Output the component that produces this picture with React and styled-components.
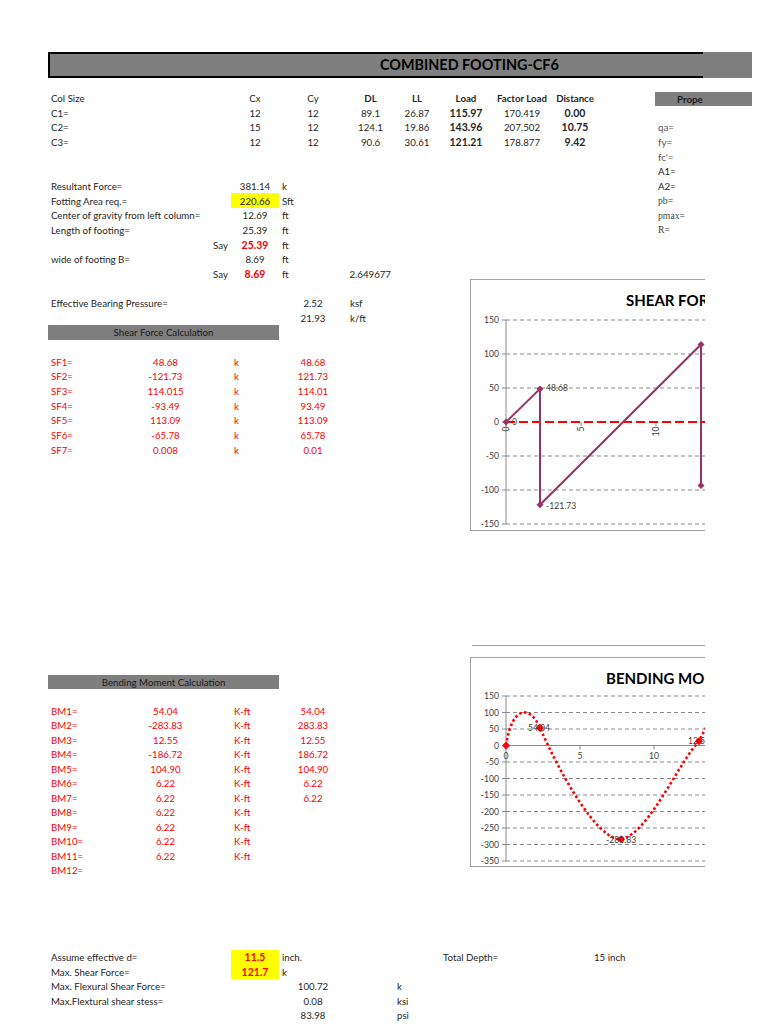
import React from "react";
import styled, { createGlobalStyle } from "styled-components";

const GlobalStyle = createGlobalStyle`
  html, body { margin: 0; padding: 0; background: #fff; }
  body {
    font-family: Lato, "Liberation Sans", sans-serif;
    color: #262626;
    overflow: hidden;
  }
`;

// spreadsheet columns A..L
const COLS = "52px 131px 48px 68px 47px 46px 52px 60px 46px 57px 48px 49px";
const GREY = "#7f7f7f";
const RED = "#ff0000";
const PLUM = "#993366";

const Page = styled.div`
  position: relative;
  width: 768px;
  height: 1024px;
  padding: 52px 0 0 48px;
  box-sizing: border-box;
  overflow: hidden;
`;

const TitleBar = styled.div`
  width: 704px;
  height: 26px;
  background: ${GREY};
  display: flex;
`;

const TitleCell = styled.div`
  width: 655px;
  box-sizing: border-box;
  border: 2px solid #000;
  border-right: none;
  padding-left: 330px;
  font-size: 14.4px;
  font-weight: 700;
  line-height: 22px;
  color: #000;
  white-space: nowrap;
`;

const Block = styled.div`
  margin-top: ${(p) => p.$top || 0}px;
`;

const Row = styled.div`
  display: grid;
  grid-template-columns: ${COLS};
  height: ${(p) => p.$h}px;
  align-items: stretch;
`;

const Cell = styled.div`
  grid-column: ${(p) => p.$col};
  display: flex;
  align-items: center;
  justify-content: ${(p) =>
    p.$align === "right" ? "flex-end" : p.$align === "center" ? "center" : "flex-start"};
  padding: 0 ${(p) => (p.$align === "center" ? 0 : 3)}px;
  padding-left: ${(p) => (p.$indent ? `${p.$indent}px` : undefined)};
  white-space: nowrap;
  font-size: ${(p) => (p.$big ? 10.5 : 9.7)}px;
  font-weight: ${(p) => (p.$bold ? 700 : 400)};
  color: ${(p) => p.$color || "#262626"};
  font-family: ${(p) => (p.$serif ? '"Liberation Serif", serif' : "inherit")};
  background: ${(p) => p.$bg || "transparent"};
`;

const HeadBar = styled.div`
  grid-column: ${(p) => p.$col};
  background: ${GREY};
  display: flex;
  align-items: center;
  justify-content: center;
  font-size: 9.7px;
  color: #1a1a1a;
  white-space: nowrap;
  transform: translateY(${(p) => p.$shift || 0}px);
`;

const Clipped = styled.span`
  display: block;
  width: 100%;
  box-sizing: border-box;
  padding-left: 22px;
  font-weight: 700;
  clip-path: inset(0 49px 0 0);
`;

const ChartFrame = styled.div`
  position: absolute;
  left: ${(p) => p.$x}px;
  top: ${(p) => p.$y}px;
  width: ${(p) => 705 - p.$x}px;
  height: ${(p) => p.$h}px;
  overflow: hidden;
  svg { display: block; }
`;

const Rule = styled.div`
  position: absolute;
  left: 472px;
  top: 645px;
  width: 233px;
  border-top: 1px solid #a6a6a6;
`;

const AxisLabel = styled.text`
  font-family: Lato, sans-serif;
  font-size: 8.6px;
  fill: #404040;
`;

const ChartTitle = styled.text`
  font-family: Lato, sans-serif;
  font-size: 15px;
  font-weight: 700;
  fill: #000;
`;

const GridLine = styled.line`
  stroke: #8a8a8a;
  stroke-width: 1;
  stroke-dasharray: ${(p) => (p.$dashed ? "4 3" : "none")};
`;

const c = (col, text, o = {}) => ({ col, text, ...o });
const ctr = { align: "center" };
const hd = { align: "center", bold: true };
const bold = { align: "center", bold: true, big: true };

const top = [
  [c(1, "Col  Size"), c(3, "Cx", ctr), c(4, "Cy", ctr), c(5, "DL", hd), c(6, "LL", hd),
    c(7, "Load", hd), c(8, "Factor Load", hd), c(9, "Distance", hd), { head: "Properties" }],
  [c(1, "C1="), c(3, "12", ctr), c(4, "12", ctr), c(5, "89.1", ctr), c(6, "26.87", ctr),
    c(7, "115.97", bold), c(8, "170.419", ctr), c(9, "0.00", bold)],
  [c(1, "C2="), c(3, "15", ctr), c(4, "12", ctr), c(5, "124.1", ctr), c(6, "19.86", ctr),
    c(7, "143.96", bold), c(8, "207.502", ctr), c(9, "10.75", bold), c(11, "qa=", { color: "#555" })],
  [c(1, "C3="), c(3, "12", ctr), c(4, "12", ctr), c(5, "90.6", ctr), c(6, "30.61", ctr),
    c(7, "121.21", bold), c(8, "178.877", ctr), c(9, "9.42", bold), c(11, "fy=", { color: "#555" })],
  [c(11, "fc'=", { color: "#555" })],
  [c(11, "A1=")],
  [c(1, "Resultant Force="), c(3, "381.14", ctr), c(4, "k"), c(11, "A2=")],
  [c(1, "Fotting Area req.="), c(3, "220.66", { align: "center", bg: "#ffff00" }), c(4, "Sft"),
    c(11, "pb=", { serif: true, color: "#444" })],
  [c(1, "Center of gravity from left column="), c(3, "12.69", ctr), c(4, "ft"),
    c(11, "pmax=", { serif: true, color: "#444" })],
  [c(1, "Length of footing="), c(3, "25.39", ctr), c(4, "ft"), c(11, "R=", { serif: true, color: "#444" })],
  [c(2, "Say", { align: "right" }), c(3, "25.39", { ...bold, color: RED }), c(4, "ft")],
  [c(1, "wide of footing B="), c(3, "8.69", ctr), c(4, "ft")],
  [c(2, "Say", { align: "right" }), c(3, "8.69", { ...bold, color: RED }), c(4, "ft"),
    c(5, "2.649677", { align: "right" })],
  [],
  [c(1, "Effective Bearing Pressure="), c(4, "2.52", ctr), c(5, "ksf")],
  [c(4, "21.93", ctr), c(5, "k/ft")],
  [{ bar: "Shear Force Calculation" }],
  [],
  ...[
    ["SF1=", "48.68", "48.68"],
    ["SF2=", "-121.73", "121.73"],
    ["SF3=", "114.015", "114.01"],
    ["SF4=", "-93.49", "93.49"],
    ["SF5=", "113.09", "113.09"],
    ["SF6=", "-65.78", "65.78"],
    ["SF7=", "0.008", "0.01"],
  ].map(([l, v, a]) => [
    c(1, l, { color: RED }), c(2, v, { align: "center", color: RED }),
    c(3, "k", { color: RED }), c(4, a, { align: "center", color: RED }),
  ]),
];

const bm = [
  ["BM1=", "54.04", "54.04"],
  ["BM2=", "-283.83", "283.83"],
  ["BM3=", "12.55", "12.55"],
  ["BM4=", "-186.72", "186.72"],
  ["BM5=", "104.90", "104.90"],
  ["BM6=", "6.22", "6.22"],
  ["BM7=", "6.22", "6.22"],
  ["BM8=", "6.22"],
  ["BM9=", "6.22"],
  ["BM10=", "6.22"],
  ["BM11=", "6.22"],
  ["BM12="],
];

const lower = [
  ...Array.from({ length: 15 }, () => []),
  [{ bar: "Bending Moment Calculation" }],
  [],
  ...bm.map(([l, v, a]) => {
    const r = [c(1, l, { color: RED })];
    if (v) r.push(c(2, v, { align: "center", color: RED }), c(3, "K-ft", { color: RED }));
    if (a) r.push(c(4, a, { align: "center", color: RED }));
    return r;
  }),
  [], [], [], [], [],
  [c(1, "Assume effective d="), c(3, "11.5", { ...bold, color: RED, bg: "#ffff00" }),
    c(4, "inch."), c(7, "Total Depth="), c("9 / span 2", "15  inch", { indent: 42 })],
  [c(1, "Max. Shear Force="), c(3, "121.7", { ...bold, color: RED, bg: "#ffff00" }), c(4, "k")],
  [c(1, "Max. Flexural Shear Force="), c(4, "100.72", ctr), c(6, "k")],
  [c(1, "Max.Flextural shear stess="), c(4, "0.08", ctr), c(6, "ksi")],
  [c(4, "83.98", ctr), c(6, "psi")],
];

const SheetRow = ({ cells, h }) => (
  <Row $h={h}>
    {cells.map((cell, i) => {
      if (cell.head)
        return (
          <HeadBar key={i} $col="11 / span 2" $shift={1}>
            <Clipped>{cell.head}</Clipped>
          </HeadBar>
        );
      if (cell.bar)
        return (
          <HeadBar key={i} $col="1 / span 3">
            {cell.bar}
          </HeadBar>
        );
      return (
        <Cell
          key={i}
          $col={cell.col}
          $align={cell.align}
          $bold={cell.bold}
          $big={cell.big}
          $color={cell.color}
          $serif={cell.serif}
          $bg={cell.bg}
          $indent={cell.indent}
        >
          {cell.text}
        </Cell>
      );
    })}
  </Row>
);

const Diamond = ({ x, y, r = 3.5, fill }) => (
  <polygon points={`${x},${y - r} ${x + r},${y} ${x},${y + r} ${x - r},${y}`} fill={fill} />
);

const ShearChart = () => {
  const y = (v) => 422 - v * 0.68;
  const ticks = [150, 100, 50, 0, -50, -100, -150];
  const pts = [
    [506, y(0)],
    [540, y(48.68)],
    [540, y(-121.73)],
    [701, y(114.015)],
    [701, y(-93.49)],
  ];
  return (
    <ChartFrame $x={470} $y={279} $h={252}>
      <svg width="235" height="252" viewBox="470 279 235 252">
        <rect x="470.5" y="279.5" width="300" height="251" fill="#fff" stroke="#a0a0a0" />
        <ChartTitle x="626" y="306">SHEAR FORCE DIAGRAM</ChartTitle>
        {ticks.map((v) => (
          <g key={v}>
            {v !== 0 && <GridLine $dashed x1="506" x2="720" y1={y(v)} y2={y(v)} />}
            <GridLine x1="502" x2="506" y1={y(v)} y2={y(v)} />
            <AxisLabel x="499" y={y(v) + 3} textAnchor="end">{v}</AxisLabel>
          </g>
        ))}
        <GridLine x1="506" x2="506" y1={y(150)} y2={y(-150)} />
        {[506, 581, 656].map((x) => (
          <GridLine key={x} x1={x} x2={x} y1="422" y2="426" />
        ))}
        <line x1="506" x2="720" y1="422" y2="422" stroke={RED} strokeWidth="2.2" strokeDasharray="9 4" />
        {[["0", 506], ["5", 581], ["10", 656]].map(([t, x]) => (
          <AxisLabel key={t} x={x + 3} y="426.5" textAnchor="end" transform={`rotate(-90 ${x + 3} 426.5)`}>
            {t}
          </AxisLabel>
        ))}
        <polyline points={pts.map((p) => p.join(",")).join(" ")} fill="none" stroke={PLUM} strokeWidth="2" />
        {pts.map(([px, py], i) => (
          <Diamond key={i} x={px} y={py} fill={PLUM} />
        ))}
        <AxisLabel x="512" y="425">0</AxisLabel>
        <AxisLabel x="546" y="391">48.68</AxisLabel>
        <AxisLabel x="546" y="509">-121.73</AxisLabel>
      </svg>
    </ChartFrame>
  );
};

const MomentChart = () => {
  const y = (v) => 745.5 - v * 0.33;
  const ticks = [150, 100, 50, 0, -50, -100, -150, -200, -250, -300, -350];
  const pts = [
    [506, y(0)],
    [540, y(54.04)],
    [621, y(-283.83)],
    [699, y(12.55)],
  ];
  return (
    <ChartFrame $x={470} $y={657} $h={210}>
      <svg width="235" height="210" viewBox="470 657 235 210">
        <rect x="470.5" y="657.5" width="300" height="209" fill="#fff" stroke="#a0a0a0" />
        <ChartTitle x="606" y="684">BENDING MOMENT DIAGRAM</ChartTitle>
        {ticks.map((v) => (
          <g key={v}>
            {v !== 0 && <GridLine $dashed x1="506" x2="720" y1={y(v)} y2={y(v)} />}
            <GridLine x1="502" x2="506" y1={y(v)} y2={y(v)} />
            <AxisLabel x="499" y={y(v) + 3} textAnchor="end">{v}</AxisLabel>
          </g>
        ))}
        <GridLine x1="506" x2="506" y1={y(150)} y2={y(-350)} />
        <GridLine x1="506" x2="720" y1={y(0)} y2={y(0)} />
        {[506, 580, 654].map((x) => (
          <GridLine key={x} x1={x} x2={x} y1={y(0)} y2={y(0) + 4} />
        ))}
        {[["0", 506], ["5", 580], ["10", 654]].map(([t, x]) => (
          <AxisLabel key={t} x={x} y="758.5" textAnchor="middle">{t}</AxisLabel>
        ))}
        <path
          d="M506,745.5 C512,705 530,705 540,727.7 C560,774 598,841 621,839.2 C648,835 680,760 699,741.4 C702,735 705,729 708,724"
          fill="none"
          stroke={RED}
          strokeWidth="2.6"
          strokeDasharray="2.6 2.4"
        />
        {pts.map(([px, py], i) => (
          <Diamond key={i} x={px} y={py} r={4} fill={RED} />
        ))}
        <AxisLabel x="528" y="730.5">54.04</AxisLabel>
        <AxisLabel x="606" y="842.5">-283.83</AxisLabel>
        <AxisLabel x="688" y="744">12.55</AxisLabel>
      </svg>
    </ChartFrame>
  );
};

export default function App() {
  return (
    <>
      <GlobalStyle />
      <Page>
        <TitleBar>
          <TitleCell>COMBINED FOOTING-CF6</TitleCell>
        </TitleBar>
        <Block $top={12.67}>
          {top.map((cells, i) => (
            <SheetRow key={i} cells={cells} h={14.67} />
          ))}
        </Block>
        <Block>
          {lower.map((cells, i) => (
            <SheetRow key={i} cells={cells} h={14.5} />
          ))}
        </Block>
        <ShearChart />
        <Rule />
        <MomentChart />
      </Page>
    </>
  );
}
